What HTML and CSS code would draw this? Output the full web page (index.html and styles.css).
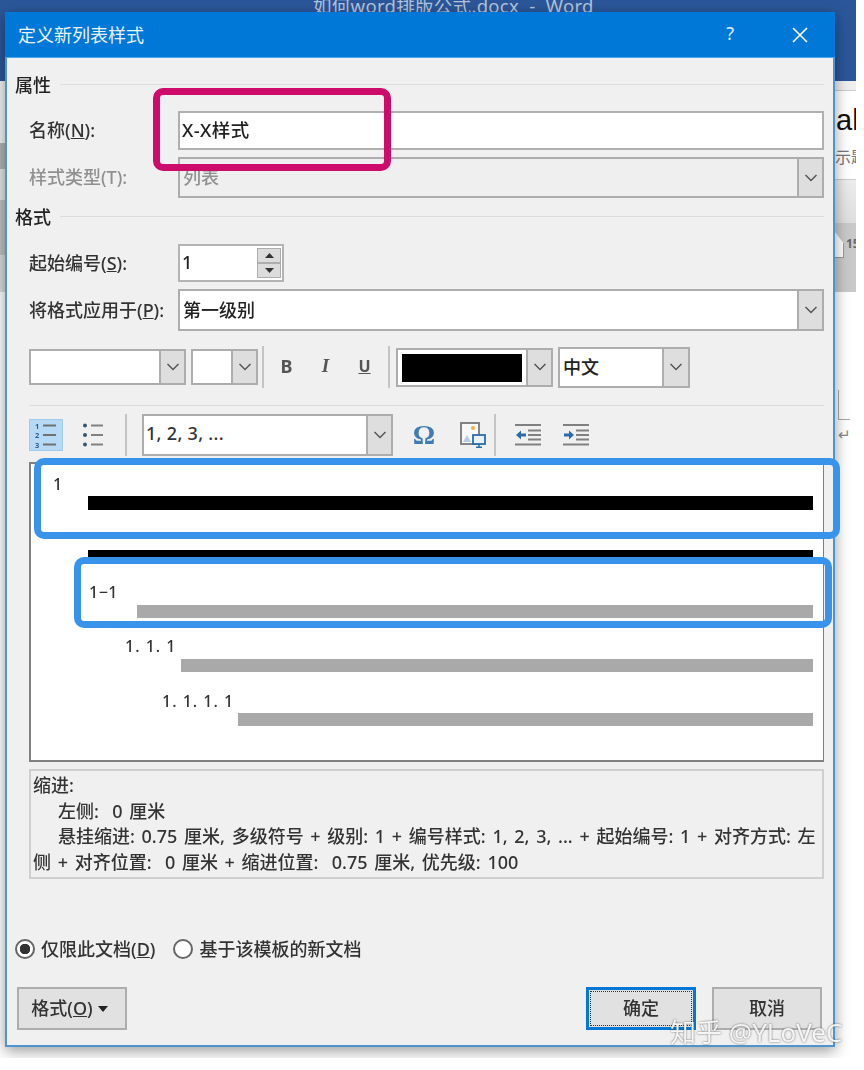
FILE: index.html
```html
<!DOCTYPE html>
<html lang="zh-CN">
<head>
<meta charset="utf-8">
<title>定义新列表样式</title>
<link rel="stylesheet" href="styles.css">
</head>
<body>
<div class="stage">
  <div class="app">
    <div class="app-bar">如何word排版公式.docx &nbsp;-&nbsp; Word</div>
    <div class="app-body">
      <div class="left">
        <div class="l-a"></div>
        <div class="l-b"></div>
        <div class="l-c"></div>
        <div class="l-d"></div>
        <div class="l-e"></div>
      </div>
      <div class="side">
        <div class="side-top"></div>
        <div class="side-al">al</div>
        <div class="side-hint">示题</div>
        <div class="side-shade"></div>
        <div class="side-ruler"><span class="side-page"></span><span class="side-num">15</span></div>
        <div class="side-corner"></div>
        <div class="side-return">↵</div>
      </div>
    </div>
  </div>

  <div class="dialog">
    <div class="titlebar">
      <span class="title">定义新列表样式</span>
      <span class="help">?</span>
      <svg class="close" width="16" height="16" viewBox="0 0 16 16"><path d="M1 1 15 15M15 1 1 15" stroke="#fff" stroke-width="1.6" fill="none"/></svg>
    </div>
    <div class="body">
      <div class="group first"><span>属性</span><i></i></div>
      <div class="row h39 mt13">
        <label>名称(<u>N</u>):</label>
        <div class="field"><span class="strong">X-X样式</span></div>
      </div>
      <div class="row h41 mt7 disabled">
        <label>样式类型(T):</label>
        <div class="combo off"><span class="val">列表</span><span class="drop"><svg width="14" height="8" viewBox="0 0 14 8"><path d="M1.5 1 7 6.5 12.5 1" stroke="#555" stroke-width="1.5" fill="none"/></svg></span></div>
      </div>
      <div class="group second"><span>格式</span><i></i></div>
      <div class="row h38 mt14">
        <label>起始编号(<u>S</u>):</label>
        <div class="spin">
          <span class="val">1</span>
          <span class="spin-btns">
            <span class="spin-btn"><svg width="9" height="5" viewBox="0 0 9 5"><path d="M4.5 0 9 5H0z" fill="#333"/></svg></span>
            <span class="spin-btn"><svg width="9" height="5" viewBox="0 0 9 5"><path d="M4.5 5 9 0H0z" fill="#333"/></svg></span>
          </span>
        </div>
      </div>
      <div class="row h42 mt7">
        <label>将格式应用于(<u>P</u>):</label>
        <div class="combo"><span class="val">第一级别</span><span class="drop"><svg width="14" height="8" viewBox="0 0 14 8"><path d="M1.5 1 7 6.5 12.5 1" stroke="#555" stroke-width="1.5" fill="none"/></svg></span></div>
      </div>

      <div class="fontbar">
        <div class="combo w-font"><span class="val"></span><span class="drop"><svg width="14" height="8" viewBox="0 0 14 8"><path d="M1.5 1 7 6.5 12.5 1" stroke="#555" stroke-width="1.5" fill="none"/></svg></span></div>
        <div class="combo w-size"><span class="val"></span><span class="drop"><svg width="14" height="8" viewBox="0 0 14 8"><path d="M1.5 1 7 6.5 12.5 1" stroke="#555" stroke-width="1.5" fill="none"/></svg></span></div>
        <span class="vsep tall"></span>
        <span class="fmt b">B</span>
        <span class="fmt i">I</span>
        <span class="fmt u">U</span>
        <span class="vsep tall"></span>
        <div class="combo w-color"><span class="swatch"></span><span class="drop"><svg width="14" height="8" viewBox="0 0 14 8"><path d="M1.5 1 7 6.5 12.5 1" stroke="#555" stroke-width="1.5" fill="none"/></svg></span></div>
        <div class="combo w-lang"><span class="val">中文</span><span class="drop"><svg width="14" height="8" viewBox="0 0 14 8"><path d="M1.5 1 7 6.5 12.5 1" stroke="#555" stroke-width="1.5" fill="none"/></svg></span></div>
      </div>

      <div class="hr"></div>

      <div class="toolbar">
        <span class="tool active">
          <svg width="26" height="26" viewBox="0 0 26 26">
            <text x="2" y="6.500" class="mini">1</text><text x="2" y="16" class="mini">2</text><text x="2" y="25.500" class="mini">3</text>
            <path d="M10 3.500h13M10 13h13M10 22.500h13" stroke="#707070" stroke-width="2" fill="none"/>
          </svg>
        </span>
        <span class="tool bullet">
          <svg width="22" height="26" viewBox="0 0 22 26">
            <circle cx="3" cy="3.500" r="2" fill="#35566f"/><circle cx="3" cy="13" r="2" fill="#35566f"/><circle cx="3" cy="22.500" r="2" fill="#35566f"/>
            <path d="M9 3.500h12M9 13h12M9 22.500h12" stroke="#808080" stroke-width="2" fill="none"/>
          </svg>
        </span>
        <span class="vsep t-sep1"></span>
        <div class="combo w-num"><span class="val">1, 2, 3, ...</span><span class="drop"><svg width="14" height="8" viewBox="0 0 14 8"><path d="M1.5 1 7 6.5 12.5 1" stroke="#555" stroke-width="1.500" fill="none"/></svg></span></div>
        <span class="omega">Ω</span>
        <svg class="pic" width="26" height="26" viewBox="0 0 26 26">
          <rect x="1" y="1" width="18" height="21" fill="#f8f8f8" stroke="#777" stroke-width="1.8"/>
          <circle cx="13" cy="6" r="2" fill="#f0b040"/>
          <path d="M3 20l4-7 4 7z" fill="#b5cde4"/>
          <rect x="13" y="13" width="12" height="9" fill="#e8f1f9" stroke="#2b6ca8" stroke-width="1.800"/>
          <path d="M19 22v3M16 25.200h6" stroke="#2b6ca8" stroke-width="1.500"/>
        </svg>
        <span class="vsep t-sep2"></span>
        <svg class="ind first-ind" width="26" height="22" viewBox="0 0 26 22">
          <path d="M0 1h26M13 6.500h13M13 11h13M13 15.500h13M0 20.500h26" stroke="#808080" stroke-width="1.800" fill="none"/>
          <path d="M1 11 6 6.500v3h5v3H6v3z" fill="#2b6ca8"/>
        </svg>
        <svg class="ind" width="26" height="22" viewBox="0 0 26 22">
          <path d="M0 1h26M13 6.500h13M13 11h13M13 15.500h13M0 20.500h26" stroke="#808080" stroke-width="1.800" fill="none"/>
          <path d="M11 11 6 6.500v3H1v3h5v3z" fill="#2b6ca8"/>
        </svg>
      </div>

      <div class="preview">
        <div class="num n1">1</div>
        <div class="bar black b1"></div>
        <div class="bar black b1b"></div>
        <div class="num n2">1−1</div>
        <div class="bar grey b2"></div>
        <div class="num n3">1. 1. 1</div>
        <div class="bar grey b3"></div>
        <div class="num n4">1. 1. 1. 1</div>
        <div class="bar grey b4"></div>
      </div>

      <div class="desc">
        <p>缩进:</p>
        <p class="in">左侧:&nbsp; 0 厘米</p>
        <p class="in">悬挂缩进: 0.75 厘米, 多级符号 + 级别: 1 + 编号样式: 1, 2, 3, ... + 起始编号: 1 + 对齐方式: 左</p>
        <p>侧 + 对齐位置:&nbsp; 0 厘米 + 缩进位置:&nbsp; 0.75 厘米, 优先级: 100</p>
      </div>

      <div class="radios">
        <span class="radio on"></span><span class="r-label">仅限此文档(<u>D</u>)</span>
        <span class="radio second-radio"></span><span class="r-label">基于该模板的新文档</span>
      </div>

      <div class="buttons">
        <span class="btn fmt-btn"><span class="btn-text">格式(<u>O</u>)</span> <svg class="caret" width="10" height="6" viewBox="0 0 10 6"><path d="M0 0h10L5 6z" fill="#222"/></svg></span>
        <span class="btn default push"><span class="dots"><span class="btn-text">确定</span></span></span>
        <span class="btn cancel"><span class="btn-text">取消</span></span>
      </div>
    </div>
  </div>

  <div class="mark mark-pink"></div>
  <div class="mark mark-blue1"></div>
  <div class="mark mark-blue2"></div>
  <div class="watermark">知乎 @YLoVeC</div>
</div>
</body>
</html>
```
FILE: styles.css
```css
* { box-sizing: border-box; }
html, body { margin: 0; padding: 0; background: #fff; }
body { font-family: "Noto Sans", "Noto Sans CJK SC", sans-serif; color: #222; font-weight: 500; }
.stage { position: relative; width: 856px; height: 1058px; overflow: hidden; background: #fff; }

/* backdrop: Word window behind the dialog */
.app { height: 100%; display: flex; flex-direction: column; background: #fff; }
.app-bar { height: 81px; flex: none; background: #2b579a; color: #b3c4dc; font-size: 18.5px; font-weight: 400; line-height: 12px; padding-left: 313px; white-space: nowrap; letter-spacing: .3px; }
.app-body { flex: 1; display: flex; justify-content: space-between; }
.left { width: 5px; }
.l-a { height: 62px; background: #f4f4f4; }
.l-b { height: 26px; background: #b5b5b5; }
.l-c { height: 31px; background: #e6e6e6; }
.l-d { height: 55px; background: #c2c2c2; }
.l-e { height: 37px; background: #dcdcdc; }
.side { width: 21px; overflow: hidden; white-space: nowrap; font-weight: 400; }
.side-top { height: 10px; background: #efefef; border-bottom: 1px solid #ccc; }
.side-al { margin-top: 14px; font-family: "Liberation Sans", sans-serif; font-size: 29px; line-height: 30px; color: #111; padding-left: 1px; }
.side-hint { margin-top: 12px; height: 33px; border-bottom: 1px solid #ccc; font-size: 16px; line-height: 20px; color: #777; }
.side-shade { height: 43px; background: linear-gradient(#ececec, #dedede); }
.side-ruler { height: 69px; background: #c9c9c9; display: flex; align-items: flex-start; padding-top: 9px; font-size: 12px; line-height: 24px; color: #666; font-weight: 700; }
.side-page { width: 9px; height: 26px; background: #fff; border-right: 1px solid #999; border-bottom: 1px solid #999; flex: none; clip-path: polygon(0 0, 100% 45%, 100% 100%, 0 100%); }
.side-num { margin-left: 2px; }
.side-corner { margin-top: 98px; width: 12px; height: 30px; border: solid #aaa; border-width: 0 0 1px 1px; margin-left: 3px; }
.side-return { margin-top: 5px; font-size: 15px; color: #888; line-height: 18px; padding-left: 3px; }

/* dialog window */
.dialog { position: absolute; left: 5px; top: 12px; width: 830px; height: 1035px; background: #f0f0f0; border: 2px solid #4f94cd; border-top: 0; box-shadow: 0 4px 14px rgba(0,0,0,.4); display: flex; flex-direction: column; filter: blur(.45px); }
.titlebar { height: 46px; flex: none; margin: 0 -2px; background: #0078d7; color: #fff; display: flex; align-items: center; padding-left: 13px; border-bottom: 1px solid #4ea5e8; }
.title { font-size: 18px; color: #e8f3fc; padding-bottom: 2px; font-weight: 400; }
.help { margin-left: auto; font-size: 18px; color: #dcecf9; padding-bottom: 3px; font-weight: 400; }
.close { margin: 0 27px 0 58px; }

.body { flex: 1; padding: 0 9px 0 22px; display: flex; flex-direction: column; }
.group { display: flex; align-items: center; height: 24px; margin-left: -14px; font-size: 18px; gap: 9px; color: #222; }
.group span { padding-bottom: 4px; }
.group i { flex: 1; height: 1px; background: #dcdcdc; margin-top: -4px; }
.group.first { margin-top: 16px; }
.group.second { margin-top: 8px; }

.row { display: grid; grid-template-columns: 149px 1fr; align-items: center; font-size: 18px; }
.row label { color: #333; white-space: nowrap; padding-bottom: 3px; }
.h39 { height: 39px; } .h41 { height: 41px; } .h38 { height: 38px; } .h42 { height: 42px; }
.mt13 { margin-top: 13px; } .mt7 { margin-top: 7px; } .mt14 { margin-top: 14px; }
.disabled label, .disabled .val { color: #909090; }

.field { height: 100%; border: 2px solid #b0b0b0; background: #fff; display: flex; align-items: center; padding-left: 2px; }
.strong { font-size: 18.500px; letter-spacing: .4px; color: #222; padding-bottom: 4px; }

.combo { height: 100%; display: flex; border: 2px solid #adadad; background: #fff; font-size: 18px; }
.combo.off { background: #efefef; }
.val { flex: 1; display: flex; align-items: center; padding: 0 0 3px 3px; white-space: nowrap; }
.drop { flex: none; width: 25px; background: #dedede; border-left: 2px solid #adadad; display: flex; align-items: center; justify-content: center; }

.spin { width: 106px; height: 100%; display: flex; border: 2px solid #b4b4b4; background: #fff; font-size: 18px; }
.spin .val { padding-left: 2px; }
.spin-btns { width: 24px; flex: none; display: flex; flex-direction: column; justify-content: center; margin: 2px 1px 2px 0; }
.spin-btn { flex: 1; background: #dcdcdc; border: 1px solid #adadad; display: flex; align-items: center; justify-content: center; }

.fontbar { height: 42px; margin-top: 15px; display: flex; align-items: center; }
.fontbar .combo { height: 36px; }
.w-font { width: 157px; }
.w-size { width: 67px; margin-left: 5px; }
.vsep { width: 2px; background: #c4c4c4; flex: none; }
.tall { height: 42px; }
.w-size + .tall { margin-left: 4px; }
.fmt { width: 39px; text-align: center; font-size: 18px; color: #555; font-weight: 700; padding-bottom: 2px; }
.fmt.b { margin-left: 3px; }
.fmt.i { font-family: "Liberation Serif", serif; font-style: italic; font-size: 19px; }
.fmt.u { text-decoration: underline; font-size: 16px; margin-right: 2px; }
.fmt + .tall { margin-left: 2px; }
.fontbar .w-color { width: 157px; margin-left: 6px; height: 39px; }
.swatch { flex: 1; margin: 4px 4px 3px 4px; background: #000; }
.fontbar .w-lang { width: 132px; height: 41px; margin-left: 5px; }
.w-lang .drop { width: 26px; }

.hr { height: 1px; margin-top: 17px; background: #dcdcdc; flex: none; }

.toolbar { height: 43px; margin-top: 7px; display: flex; align-items: center; flex: none; }
.tool { display: flex; align-items: center; justify-content: center; }
.tool.active { width: 34px; height: 32px; background: #b6daf5; border: 1px solid #9fcbee; }
.mini { font-size: 7.500px; font-weight: 700; fill: #2a5f90; font-family: "Noto Sans", sans-serif; }
.tool.bullet { margin-left: 19px; width: 22px; }
.t-sep1 { height: 42px; margin-left: 21px; }
.fontbar + .hr + .toolbar .w-num { width: 251px; height: 42px; margin-left: 15px; }
.w-num { width: 251px; height: 42px; margin-left: 15px; flex: none; }
.w-num .val { color: #333; padding-left: 2px; letter-spacing: .3px; }
.omega { margin-left: 19px; width: 24px; font-family: "Liberation Serif", serif; font-weight: 700; font-size: 28px; color: #3f7cb5; text-align: center; }
.pic { margin-left: 24px; }
.t-sep2 { height: 42px; margin-left: 8px; }
.ind { margin-left: 22px; }
.ind.first-ind { margin-left: 19px; }

.preview { height: 300px; margin-top: 6px; background: #fff; border: 1px solid #808080; border-width: 2px 1px 2px 2px; padding-top: 9px; flex: none; font-size: 16px; color: #333; font-family: "Noto Sans", sans-serif; }
.num { height: 22px; line-height: 22px; white-space: nowrap; }
.bar { margin-right: 10px; }
.black { background: #000; height: 14px; }
.grey { background: #a9a9a9; height: 13px; }
.n1 { padding-left: 22px; margin-bottom: 1px; }
.b1, .b1b { margin-left: 57px; }
.b1b { margin-top: 40px; margin-bottom: 17px; }
.n2 { padding-left: 58px; margin-bottom: 2px; letter-spacing: .5px; }
.b2 { margin-left: 106px; margin-bottom: 17px; }
.n3 { padding-left: 94px; margin-bottom: 2px; letter-spacing: 1px; }
.b3 { margin-left: 150px; margin-bottom: 18px; }
.n4 { padding-left: 131px; margin-bottom: 1px; letter-spacing: 1px; }
.b4 { margin-left: 207px; }

.desc { height: 110px; margin-top: 7px; flex: none; border: 2px solid #cfcfcf; padding: 2px 0 0 2px; font-size: 18px; line-height: 25.5px; color: #333; white-space: nowrap; word-spacing: 2px; }
.desc p { margin: 0; }
.desc .in { padding-left: 25px; }

.radios { height: 22px; margin-top: 59px; margin-left: -14px; display: flex; align-items: center; font-size: 18px; color: #333; flex: none; }
.radio { width: 20px; height: 20px; border-radius: 50%; border: 2px solid #666; background: #fff; flex: none; }
.radio.on { background: radial-gradient(circle, #333 0 5px, #fff 5.5px); }
.r-label { margin-left: 6px; white-space: nowrap; padding-bottom: 3px; }
.second-radio { margin-left: 18px; }

.buttons { height: 43px; margin-top: 27px; margin-left: -12px; display: flex; flex: none; }
.btn { width: 110px; height: 43px; background: #e1e1e1; border: 2px solid #adadad; display: flex; align-items: center; justify-content: center; font-size: 18px; color: #333; white-space: nowrap; }
.fmt-btn { padding-right: 5px; }
.btn-text { padding-bottom: 3px; }
.caret { margin-left: 5px; }
.default { border: 3px solid #0078d7; padding: 1px; }
.push { margin-left: auto; }
.dots { width: 100%; height: 100%; display: flex; align-items: center; justify-content: center; border: 1.500px dotted #333; }
.cancel { margin-left: 16px; margin-right: 2px; }

/* annotations drawn on top of the screenshot */
.mark { position: absolute; border-radius: 10px; }
.mark-pink { left: 153px; top: 88px; width: 238px; height: 83px; border: 7px solid #cc0b6b; }
.mark-blue1 { left: 34px; top: 458px; width: 806px; height: 81px; border: 7px solid #3893ea; }
.mark-blue2 { left: 74px; top: 557px; width: 758px; height: 71px; border: 7px solid #3893ea; }
.watermark { position: absolute; left: 670px; top: 1016px; font-size: 26px; font-weight: 400; line-height: 32px; color: rgba(255,255,255,.92); text-shadow: 0 0 2px rgba(50,50,50,.8); white-space: nowrap; }
```
